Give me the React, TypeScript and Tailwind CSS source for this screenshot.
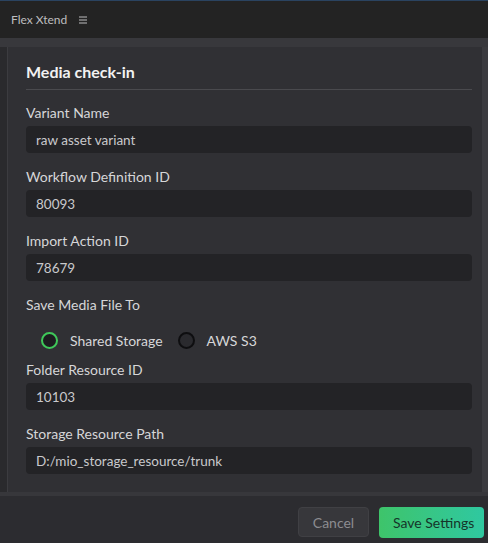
import { useState } from "react";

interface Field {
  label: string;
  value: string;
}

const topFields: Field[] = [
  { label: "Variant Name", value: "raw asset variant" },
  { label: "Workflow Definition ID", value: "80093" },
  { label: "Import Action ID", value: "78679" },
];

const bottomFields: Field[] = [
  { label: "Folder Resource ID", value: "10103" },
  { label: "Storage Resource Path", value: "D:/mio_storage_resource/trunk" },
];

function TextField({ field }: { field: Field }) {
  return (
    <div className="flex flex-col">
      <label className="h-[20px] leading-[20px] text-[14px] text-[#d6d6d8]">{field.label}</label>
      <input
        defaultValue={field.value}
        className="mt-[3px] h-[27px] rounded-[4px] bg-[#232326] px-[10px] text-[13.5px] text-[#c9c9cc] outline-none"
      />
    </div>
  );
}

function Radio({ label, checked, onClick }: { label: string; checked: boolean; onClick: () => void }) {
  return (
    <button onClick={onClick} className="flex items-center gap-[12px]">
      <span
        className={`h-[17px] w-[17px] rounded-full border-2 ${checked ? "border-[#3fc85a] bg-[#1d1d20]" : "border-[#0e0e10] bg-[#2a2a2e]"}`}
      />
      <span className="text-[14px] text-[#d6d6d8]">{label}</span>
    </button>
  );
}

export default function App() {
  const [target, setTarget] = useState<"shared" | "s3">("shared");

  return (
    <div
      className="flex h-[543px] w-[488px] flex-col overflow-hidden bg-[#2c2c30]"
      style={{ fontFamily: "Lato, 'Open Sans', sans-serif" }}
    >
      {/* Header */}
      <div className="flex h-[38px] shrink-0 items-center gap-[12px] border-t border-[#2a4360] bg-[#232323] pl-[11px]">
        <span className="text-[12px] text-[#bdbdbf]">Flex Xtend</span>
        <svg width="8" height="8" viewBox="0 0 8 8" className="text-[#bdbdbf]">
          <path d="M0 1h8M0 4h8M0 7h8" stroke="currentColor" strokeWidth="1" />
        </svg>
      </div>
      <div className="h-[9px] shrink-0 bg-[#38383c]" />

      {/* Body */}
      <div className="flex h-[445px] shrink-0">
        <div className="w-[7px] bg-[#2a2a2d]" />
        <div className="flex flex-1 flex-col border-l border-[#3c3c40] bg-[#303034] pl-[18px] pr-[10px]">
          <h1 className="mt-[15px] h-[20px] text-[16px] font-bold leading-[20px] text-[#f2f2f2]">Media check-in</h1>
          <div className="mt-[7px] h-px bg-[#4a4a4e]" />
          <div className="mt-[13px] flex flex-col gap-[14px]">
            {topFields.map((f) => (
              <TextField key={f.label} field={f} />
            ))}
            <div className="flex flex-col">
              <span className="h-[20px] leading-[20px] text-[14px] text-[#d6d6d8]">Save Media File To</span>
              <div className="mt-[15px] flex h-[20px] items-center gap-[15px] pl-[15px]">
                <Radio label="Shared Storage" checked={target === "shared"} onClick={() => setTarget("shared")} />
                <Radio label="AWS S3" checked={target === "s3"} onClick={() => setTarget("s3")} />
              </div>
            </div>
          </div>
          <div className="mt-[10px] flex flex-col gap-[14px]">
            {bottomFields.map((f) => (
              <TextField key={f.label} field={f} />
            ))}
          </div>
        </div>
        <div className="w-[6px] bg-[#3b3b3f]" />
      </div>
      <div className="h-[4px] shrink-0 bg-[#37373b]" />

      {/* Footer */}
      <div className="flex flex-1 items-center justify-end gap-[10px] pt-[5px] pr-[4px]">
        <button className="h-[30px] w-[71px] rounded-[4px] border border-[#404044] bg-[#37373b] text-[14px] text-[#8c8c90]">
          Cancel
        </button>
        <button className="h-[31px] w-[105px] rounded-[4px] bg-gradient-to-r from-[#3ec46a] to-[#2fc8a0] pl-[14px] text-left text-[14px] text-[#15352a]">
          Save Settings
        </button>
      </div>
    </div>
  );
}
